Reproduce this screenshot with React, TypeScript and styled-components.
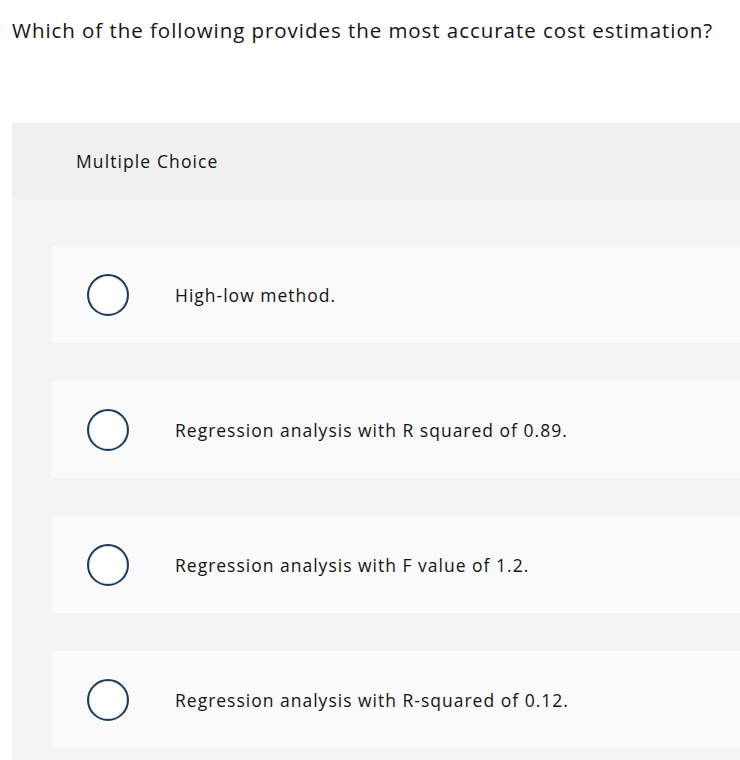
import * as React from "react";
import styled, { createGlobalStyle } from "styled-components";

const GlobalStyle = createGlobalStyle`
  html, body {
    margin: 0;
    padding: 0;
    background: #ffffff;
  }
  body {
    font-family: "Open Sans", Lato, Arial, sans-serif;
    color: #1a1a1a;
  }
`;

const Page = styled.div`
  width: 740px;
  height: 760px;
  overflow: hidden;
`;

const Question = styled.h1`
  margin: 0;
  padding: 16px 0 0 12px;
  height: 123px;
  box-sizing: border-box;
  font-size: 20.5px;
  font-weight: 400;
  letter-spacing: 0.95px;
  line-height: 28px;
  white-space: nowrap;
  color: #141414;
`;

const Panel = styled.section`
  margin-left: 12px;
  width: 760px;
  border-radius: 3px;
  overflow: hidden;
  background: #f4f4f4;
`;

const PanelHeader = styled.div`
  display: flex;
  align-items: center;
  height: 75px;
  padding-left: 64px;
  background: #f0f0f0;
  font-size: 17.5px;
  letter-spacing: 1.1px;
  color: #141414;
`;

const Choices = styled.div`
  display: flex;
  flex-direction: column;
  gap: 38px;
  padding: 48px 0 40px 39px;
`;

const Choice = styled.label`
  display: flex;
  align-items: center;
  gap: 46px;
  height: 97px;
  padding-left: 36px;
  border-radius: 3px;
  background: #fafafa;
  cursor: pointer;
`;

const Radio = styled.span`
  flex: none;
  width: 42px;
  height: 42px;
  box-sizing: border-box;
  border-radius: 50%;
  border: 2px solid #1d3a5a;
  background: #ffffff;
  box-shadow: inset 0 0 0 1px #dfe7ef;
`;

const ChoiceText = styled.span`
  font-size: 17.5px;
  letter-spacing: 1px;
  color: #141414;
`;

const choices = [
  "High-low method.",
  "Regression analysis with R squared of 0.89.",
  "Regression analysis with F value of 1.2.",
  "Regression analysis with R-squared of 0.12.",
];

export default function App() {
  return (
    <Page>
      <GlobalStyle />
      <Question>
        Which of the following provides the most accurate cost estimation?
      </Question>
      <Panel>
        <PanelHeader>Multiple Choice</PanelHeader>
        <Choices>
          {choices.map(text => (
            <Choice key={text}>
              <Radio />
              <ChoiceText>{text}</ChoiceText>
            </Choice>
          ))}
        </Choices>
      </Panel>
    </Page>
  );
}
